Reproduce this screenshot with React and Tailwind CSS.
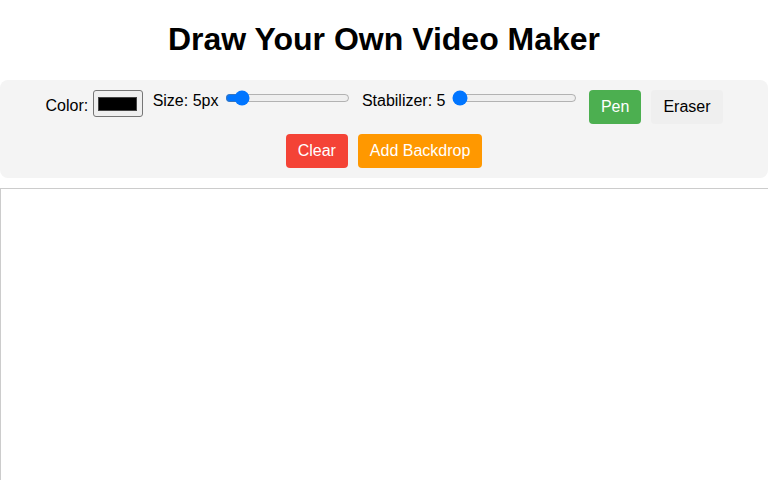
import React from "react";

export default function App() {
  return (
    <div className="w-full h-[480px] bg-white overflow-hidden" style={{ fontFamily: '"Liberation Sans", Arial, sans-serif' }}>
      <h1 className="text-center text-[32px] font-bold leading-[37px] my-[21.44px] text-black">
        Draw Your Own Video Maker
      </h1>
      <div className="flex flex-wrap justify-center items-start gap-[10px] p-[10px] bg-[#f4f4f4] rounded-lg mb-[10px] text-base text-black">
        <label className="flex items-start h-[34px]">
          <span className="leading-[18px] mt-[7px]">Color:</span>
          <div className="ml-[4.45px] w-[50px] h-[27px] border border-[#767676] rounded-[3px] bg-[#efefef] pl-[4px] pr-[5px] pt-[6px] pb-[5px]">
            <div className="w-full h-full bg-black border border-[#444]" />
          </div>
        </label>
        <label className="flex items-start h-[34px]">
          <span className="leading-[18px] mt-[2px]">Size: 5px</span>
          <input type="range" min="1" max="50" defaultValue="5" className="ml-[6.45px] mr-[2px] w-[125px] h-[16px] m-0 mt-0" />
        </label>
        <label className="flex items-start h-[34px]">
          <span className="leading-[18px] mt-[2px]">Stabilizer: 5</span>
          <input type="range" min="5" max="50" defaultValue="5" className="ml-[6.45px] mr-[2px] w-[125px] h-[16px] m-0 mt-0" />
        </label>
        <button className="px-[12px] py-[8px] rounded-[4px] bg-[#4caf50] text-white leading-[18px]">Pen</button>
        <button className="px-[12px] py-[8px] rounded-[4px] bg-[#efefef] text-black leading-[18px]">Eraser</button>
        <button className="px-[12px] py-[8px] rounded-[4px] bg-[#f44336] text-white leading-[18px]">Clear</button>
        <button className="px-[12px] py-[8px] rounded-[4px] bg-[#ff9800] text-white leading-[18px]">Add Backdrop</button>
      </div>
      <div className="w-[800px] h-[400px] border border-[#cccccc] bg-white" />
    </div>
  );
}
